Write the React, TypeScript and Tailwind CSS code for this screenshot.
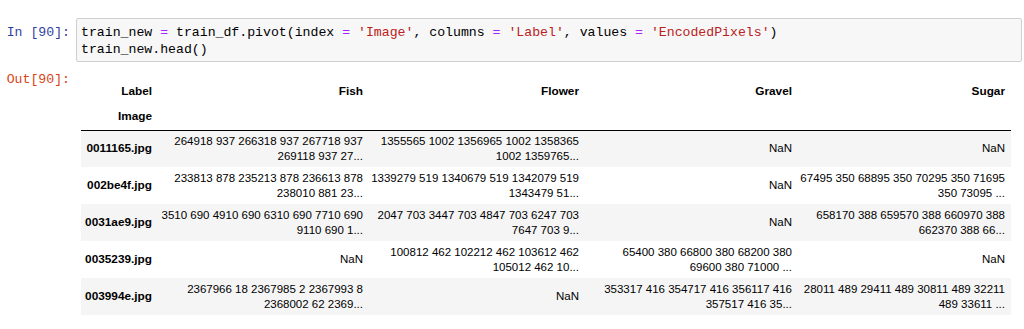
import React from "react";

const rows: { idx: string; cells: (string[] | null)[] }[] = [
  {
    idx: "0011165.jpg",
    cells: [
      ["264918 937 266318 937 267718 937", "269118 937 27..."],
      ["1355565 1002 1356965 1002 1358365", "1002 1359765..."],
      null,
      null,
    ],
  },
  {
    idx: "002be4f.jpg",
    cells: [
      ["233813 878 235213 878 236613 878", "238010 881 23..."],
      ["1339279 519 1340679 519 1342079 519", "1343479 51..."],
      null,
      ["67495 350 68895 350 70295 350 71695", "350 73095 ..."],
    ],
  },
  {
    idx: "0031ae9.jpg",
    cells: [
      ["3510 690 4910 690 6310 690 7710 690", "9110 690 1..."],
      ["2047 703 3447 703 4847 703 6247 703", "7647 703 9..."],
      null,
      ["658170 388 659570 388 660970 388", "662370 388 66..."],
    ],
  },
  {
    idx: "0035239.jpg",
    cells: [
      null,
      ["100812 462 102212 462 103612 462", "105012 462 10..."],
      ["65400 380 66800 380 68200 380", "69600 380 71000 ..."],
      null,
    ],
  },
  {
    idx: "003994e.jpg",
    cells: [
      ["2367966 18 2367985 2 2367993 8", "2368002 62 2369..."],
      null,
      ["353317 416 354717 416 356117 416", "357517 416 35..."],
      ["28011 489 29411 489 30811 489 32211", "489 33611 ..."],
    ],
  },
];

const P = ({ children }: { children: React.ReactNode }) => (
  <span className="text-[#aa22ff]">{children}</span>
);
const S = ({ children }: { children: React.ReactNode }) => (
  <span className="text-[#ba2121]">{children}</span>
);

export default function App() {
  return (
    <div className="w-[1024px] h-[329px] bg-white overflow-hidden font-['Liberation_Sans',Arial,sans-serif] text-black">
      {/* input cell */}
      <div className="flex pt-[18px]">
        <div className="w-[76px] shrink-0 pt-[6px] pr-[6px] text-right font-['Liberation_Mono',monospace] text-[13.2px] leading-[17px] text-[#303f9f]">
          In&nbsp;[90]:
        </div>
        <div className="w-[946px] border border-[#cfcfcf] rounded-[2px] bg-[#f7f7f7] px-[4px] pt-[5px] pb-[3px] font-['Liberation_Mono',monospace] text-[13.2px] leading-[17px] whitespace-pre">
          <div>
            train_new <P>=</P> train_df.pivot(index <P>=</P> <S>'Image'</S>, columns <P>=</P> <S>'Label'</S>, values <P>=</P> <S>'EncodedPixels'</S>)
          </div>
          <div>train_new.head()</div>
        </div>
      </div>
      {/* output */}
      <div className="flex pt-[7px]">
        <div className="w-[76px] shrink-0 pt-[2px] pr-[6px] text-right font-['Liberation_Mono',monospace] text-[13.2px] leading-[17px] text-[#d84315]">
          Out[90]:
        </div>
        <div className="pl-[5px] pt-[9px]">
          <table className="table-fixed border-collapse text-[11.5px] leading-[15px] w-[930px]">
            <colgroup>
              <col className="w-[77px]" />
              <col className="w-[211px]" />
              <col className="w-[216px]" />
              <col className="w-[213px]" />
              <col className="w-[213px]" />
            </colgroup>
            <thead>
              <tr className="h-[26px]">
                <th className="text-right pr-[6px] font-bold align-middle text-[11.8px]">Label</th>
                <th className="text-right pr-[6px] font-bold align-middle text-[11.8px]">Fish</th>
                <th className="text-right pr-[6px] font-bold align-middle text-[11.8px]">Flower</th>
                <th className="text-right pr-[6px] font-bold align-middle text-[11.8px]">Gravel</th>
                <th className="text-right pr-[6px] font-bold align-middle text-[11.8px]">Sugar</th>
              </tr>
              <tr className="h-[26px] border-b border-black">
                <th className="text-right pr-[6px] font-bold align-middle text-[11.8px]">Image</th>
                <th></th>
                <th></th>
                <th></th>
                <th></th>
              </tr>
            </thead>
            <tbody>
              {rows.map((r, i) => (
                <tr key={r.idx} className={i % 2 === 0 ? "h-[37px] bg-[#f5f5f5]" : "h-[37px] bg-white"}>
                  <th className="text-right pr-[6px] font-bold align-middle text-[11.8px]">{r.idx}</th>
                  {r.cells.map((c, j) => (
                    <td key={j} className="text-right pr-[6px] align-middle whitespace-nowrap">
                      {c ? (
                        <>
                          <div>{c[0]}</div>
                          <div>{c[1]}</div>
                        </>
                      ) : (
                        "NaN"
                      )}
                    </td>
                  ))}
                </tr>
              ))}
            </tbody>
          </table>
        </div>
      </div>
    </div>
  );
}
